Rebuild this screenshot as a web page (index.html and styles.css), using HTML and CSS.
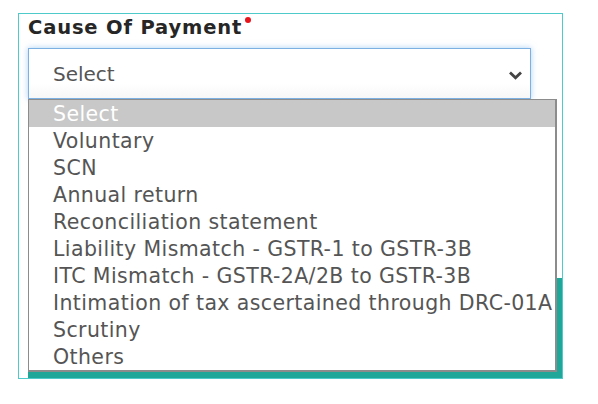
FILE: index.html
```html
<!DOCTYPE html>
<html>
<head>
<meta charset="utf-8">
<link rel="stylesheet" href="styles.css">
</head>
<body>
<div class="panel">
  <div class="label">Cause Of Payment<span class="req"></span></div>
  <div class="select">
    <span class="select-text">Select</span>
    <svg class="chev" width="15" height="10" viewBox="0 0 15 10"><path d="M2 2.5 L7.5 7.8 L13 2.5" fill="none" stroke="#444" stroke-width="2.8"/></svg>
  </div>
  <div class="button"></div>
  <ul class="list">
    <li class="sel">Select</li>
    <li>Voluntary</li>
    <li>SCN</li>
    <li>Annual return</li>
    <li>Reconciliation statement</li>
    <li>Liability Mismatch - GSTR-1 to GSTR-3B</li>
    <li>ITC Mismatch - GSTR-2A/2B to GSTR-3B</li>
    <li>Intimation of tax ascertained through DRC-01A</li>
    <li>Scrutiny</li>
    <li>Others</li>
  </ul>
</div>
</body>
</html>
```
FILE: styles.css
```css
html, body {
  margin: 0;
  padding: 0;
  background: #fff;
}
body {
  font-family: "DejaVu Sans", Verdana, sans-serif;
}
.panel {
  position: relative;
  box-sizing: border-box;
  margin: 13px 0 0 18px;
  width: 545px;
  height: 366px;
  border: 1px solid #4ecaca;
  padding: 3px 0 0 9px;
}
.label {
  font-weight: bold;
  font-size: 19.5px;
  letter-spacing: 0.85px;
  color: #262626;
  height: 31px;
  line-height: 20px;
  position: relative;
}
.req {
  display: inline-block;
  width: 6px;
  height: 6px;
  border-radius: 50%;
  background: #e8141b;
  margin-left: 3px;
  vertical-align: 11px;
}
.select {
  box-sizing: border-box;
  width: 503px;
  height: 51px;
  border: 1px solid #7cb0e2;
  box-shadow: 0 0 6px rgba(102, 170, 233, 0.55);
  display: flex;
  align-items: center;
  justify-content: space-between;
  padding: 0 7px 0 24px;
  background: linear-gradient(#fff 70%, #f7f7f7);
}
.select-text {
  font-size: 20px;
  color: #555;
}
.chev {
  margin-top: 2px;
}
.button {
  position: absolute;
  left: 9px;
  right: 0;
  top: 264px;
  bottom: 0;
  background: #1fa899;
}
.list {
  position: absolute;
  left: 9px;
  top: 85px;
  box-sizing: border-box;
  width: 529px;
  height: 273px;
  margin: 0;
  padding: 0;
  list-style: none;
  background: #fff;
  border: 1px solid #8c8c8c;
  border-right-width: 2px;
  border-bottom-width: 2px;
}
.list li {
  height: 27px;
  line-height: 29px;
  padding-left: 24px;
  font-size: 20.5px;
  letter-spacing: 0.4px;
  color: #555;
  white-space: nowrap;
}
.list li.sel {
  background: #c8c8c8;
  color: #fff;
}
```
